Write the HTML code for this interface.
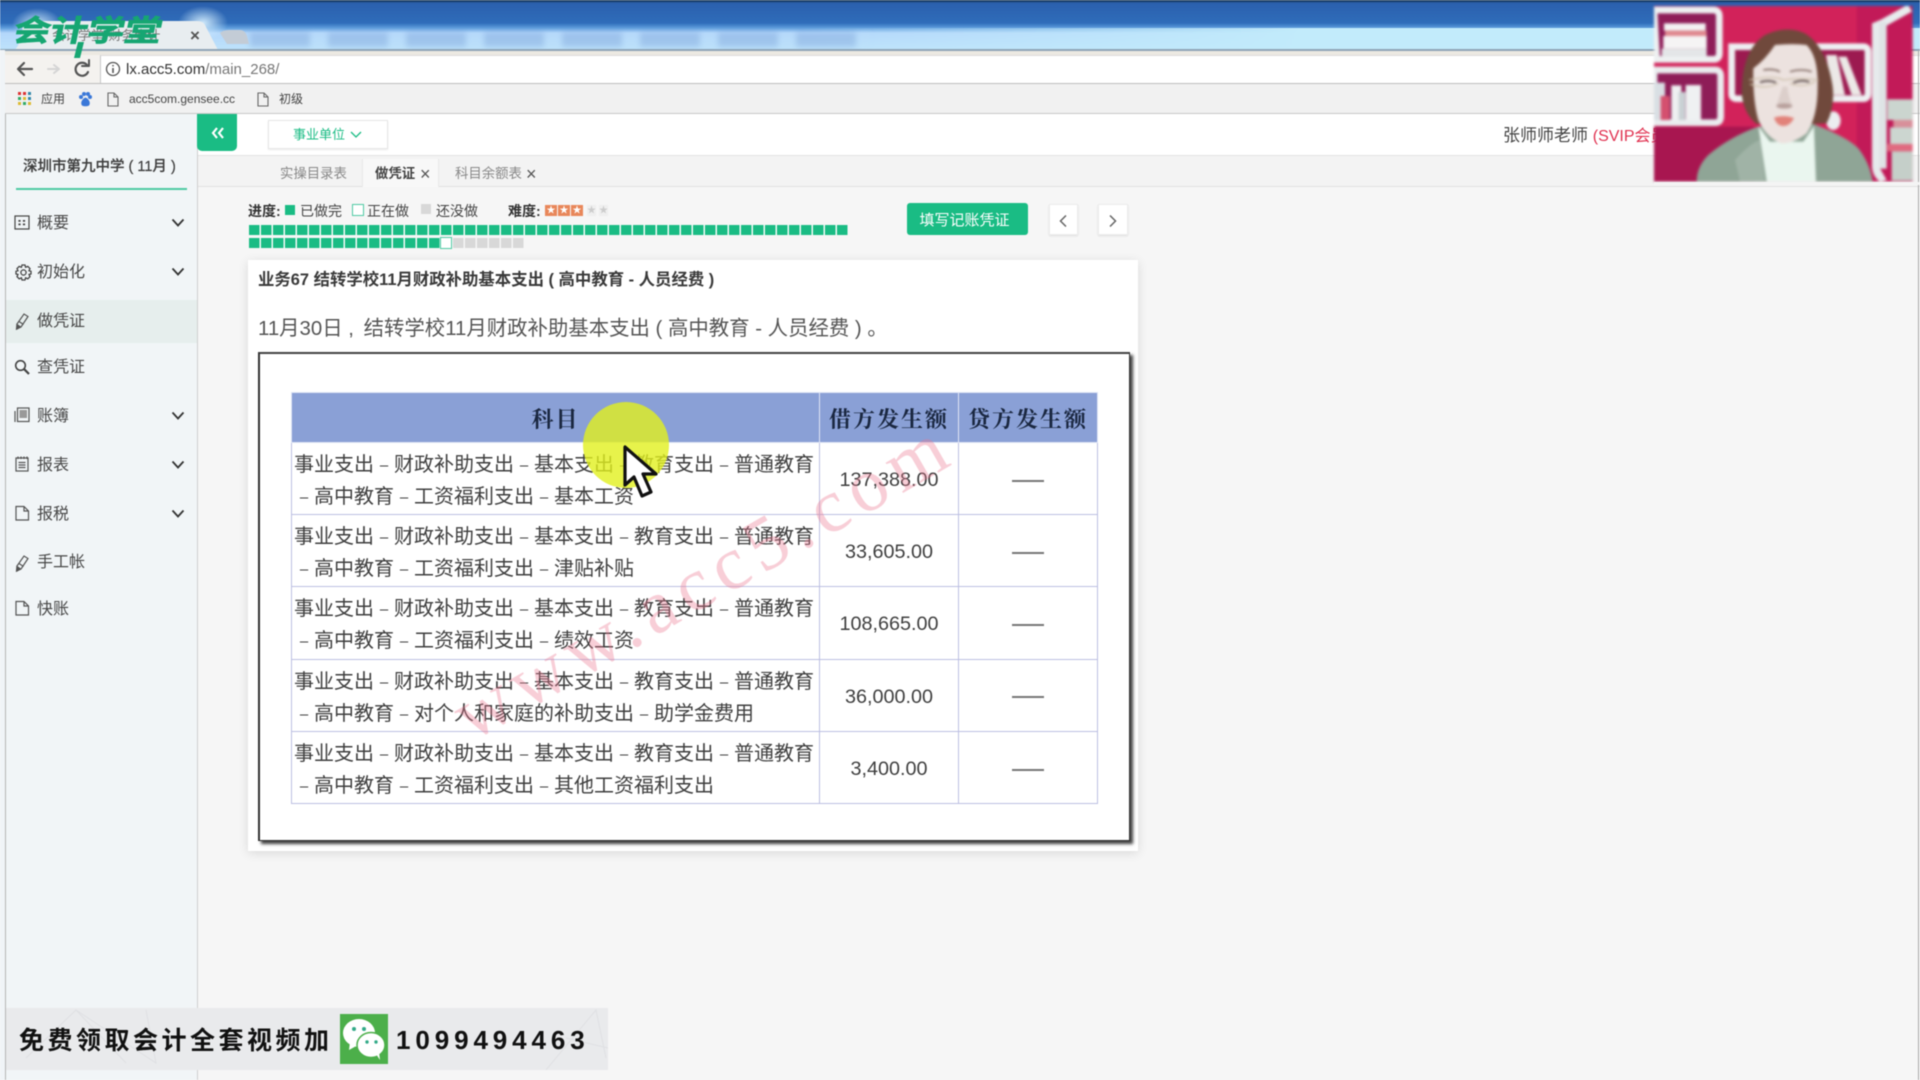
<!DOCTYPE html>
<html lang="zh"><head><meta charset="utf-8"><title>做凭证</title>
<style>
html,body{margin:0;padding:0;width:1920px;height:1080px;overflow:hidden;background:#f6f6f6}
*{box-sizing:border-box}
body{font-family:"Liberation Sans","Noto Sans CJK SC",sans-serif;color:#444}
#w{position:absolute;left:0;top:0;width:1920px;height:1080px;overflow:hidden;filter:blur(.5px)}
.a{position:absolute;white-space:nowrap}
.si{position:absolute;left:37px;font-size:16px;line-height:22px;color:#484848;white-space:nowrap}
.chev{position:absolute;left:171px}
.ic{position:absolute;left:14px}
table{position:absolute;left:291px;top:392px;width:806px;border-collapse:collapse;table-layout:fixed;font-size:20px;color:#3f3f3f}
th{height:50px;background:#8aa0d6;border:1px solid #dfe5f5;font-family:"Noto Serif CJK SC","Noto Sans CJK SC",serif;font-weight:700;font-size:22px;letter-spacing:2px;color:#1a2740;padding:2px 0 0;text-align:center}
td{height:72.2px;border:1px solid #bcbfe2;padding:3px 0 0;line-height:32px;white-space:nowrap;background:#fff}
td.t{padding:5px 0 0 2px}
td.n{text-align:center;font-size:19.8px}
td.d{text-align:center;color:#666}
td.d span{display:inline-block;width:32px;height:2px;background:#777;vertical-align:middle;font-size:0}
i{font-style:normal;display:inline-block;width:20px;text-align:center;font-size:15px;line-height:1;position:relative;top:-1px}
.sq{position:absolute;height:10px}
.st{position:absolute;top:205px;width:12px;height:11px;background:#e8875a;color:#fff;font-size:9px;line-height:11px;text-align:center}
.st2{background:#efefef;color:#ccc;width:9px}
</style></head><body><div id="w">

<!-- browser chrome -->
<div class="a" style="left:0;top:0;width:1920px;height:50px;background:linear-gradient(180deg,#17395e 0,#17395e 1px,#2b60ae 3px,#2f6dba 23px,#5e9ddc 28px,#b4d7fb 33px,#bde2fb 49px)"></div>
<div class="a" style="left:800px;top:28px;width:1120px;height:21px;background:linear-gradient(90deg,rgba(196,238,252,0),#c2ebfb 500px)"></div>
<div class="a" style="left:250px;top:32px;width:620px;height:15px;background:repeating-linear-gradient(90deg,rgba(120,160,215,.4) 0 60px,rgba(190,225,250,.2) 60px 78px);filter:blur(3px)"></div>
<div class="a" style="left:12px;top:8px;width:50px;height:34px;background:radial-gradient(closest-side,rgba(215,240,255,.95),rgba(215,240,255,0));"></div>
<div class="a" style="left:178px;top:6px;width:50px;height:34px;background:radial-gradient(closest-side,rgba(215,240,255,.95),rgba(215,240,255,0));"></div>
<svg class="a" style="left:0;top:0" width="300" height="56"><path d="M5 56V52H8Q17 52 20 40L23 26Q24 21 30 21H197Q204 21 206 27L218 50H300V56Z" fill="#e8edf0"/><path d="M220 33Q223 30 229 30H240Q245 30 247 36L249 44H227Z" fill="#c3ccd6"/></svg>
<div class="a" style="left:52px;top:27px;font-size:13px;line-height:18px;color:#777">会计学堂-财务会计</div>
<div class="a" style="left:190px;top:27px;font-size:17px;line-height:18px;color:#555;font-weight:700">×</div>

<div class="a" style="left:0;top:49px;width:1920px;height:2px;background:#8fa4b6"></div>
<div class="a" style="left:0;top:51px;width:1920px;height:5px;background:#ece9e2"></div>
<div class="a" style="left:0;top:55px;width:1920px;height:29px;background:#f4f2ef"></div>
<div class="a" style="left:100px;top:55px;width:1820px;height:28px;background:#fff;border-left:1px solid #c8c8c8;border-top:1px solid #ddd"></div>
<div class="a" style="left:0;top:83px;width:1920px;height:1px;background:#bdbdbd"></div>
<div class="a" style="left:0;top:84px;width:1920px;height:29px;background:#f1f1f1"></div>
<div class="a" style="left:0;top:113px;width:1920px;height:1px;background:#c8c8c8"></div>

<svg class="a" style="left:14px;top:58px" width="80" height="24" fill="none" stroke-linecap="round" stroke-linejoin="round">
<path d="M18 11H5M10 5L4 11L10 17" stroke="#555" stroke-width="2.2"/>
<path d="M34 11H44M40 7L45 11L40 15" stroke="#d5d5d5" stroke-width="2"/>
<path d="M73 7A6.5 6.5 0 1 0 74 14" stroke="#555" stroke-width="2.2"/><path d="M68 6H75V0" transform="translate(0,2)" stroke="#555" stroke-width="2"/>
</svg>
<svg class="a" style="left:105px;top:61px" width="16" height="16" fill="none"><circle cx="8" cy="8" r="6.5" stroke="#555" stroke-width="1.3"/><path d="M8 7V12M8 4V5.4" stroke="#555" stroke-width="1.6"/></svg>
<div class="a" style="left:126px;top:60px;font-size:15px;line-height:20px;color:#333">lx.acc5.com<span style="color:#777">/main_268/</span></div>

<svg class="a" style="left:18px;top:92px" width="14" height="15"><g><rect x="0" y="0" width="3" height="3" fill="#d33"/><rect x="5" y="0" width="3" height="3" fill="#d33"/><rect x="10" y="0" width="3" height="3" fill="#38a"/><rect x="0" y="5" width="3" height="3" fill="#3a6"/><rect x="5" y="5" width="3" height="3" fill="#db3"/><rect x="10" y="5" width="3" height="3" fill="#38a"/><rect x="0" y="10" width="3" height="3" fill="#db3"/><rect x="5" y="10" width="3" height="3" fill="#3a6"/><rect x="10" y="10" width="3" height="3" fill="#db3"/></g></svg>
<div class="a" style="left:41px;top:90px;font-size:12px;line-height:18px;color:#444">应用</div>
<svg class="a" style="left:78px;top:92px" width="15" height="15" fill="#3b78d8"><circle cx="3" cy="5" r="2"/><circle cx="12" cy="5" r="2"/><circle cx="6" cy="2" r="2"/><circle cx="10" cy="2" r="2"/><path d="M7.5 5.5C4 7 2 11 4 13.5C6 14.5 9 14.5 11 13.5C13 11 11 7 7.5 5.5Z"/></svg>
<svg class="a" style="left:107px;top:92px" width="12" height="15" fill="none" stroke="#666" stroke-width="1.1"><path d="M1 1H7L11 5V14H1ZM7 1V5H11"/></svg>
<div class="a" style="left:129px;top:90px;font-size:12px;line-height:18px;color:#444;width:111px;overflow:hidden">acc5com.gensee.cc</div>
<svg class="a" style="left:257px;top:92px" width="12" height="15" fill="none" stroke="#666" stroke-width="1.1"><path d="M1 1H7L11 5V14H1ZM7 1V5H11"/></svg>
<div class="a" style="left:279px;top:90px;font-size:12px;line-height:18px;color:#444">初级</div>

<!-- logo -->
<div class="a" style="left:17px;top:16px;font-size:37px;line-height:37px;font-weight:700;color:#16a672;transform:skewX(-12deg) scaleY(.8);transform-origin:left top;-webkit-text-stroke:1px #16a672;letter-spacing:0">会计学堂</div>
<div class="a" style="left:76px;top:42px;width:6px;height:16px;background:#16a672;transform:skewX(-14deg)"></div>

<!-- app header -->
<div class="a" style="left:0;top:114px;width:1920px;height:42px;background:#fff"></div>
<div class="a" style="left:0;top:155px;width:1920px;height:1px;background:#e2e2e2"></div>
<div class="a" style="left:0;top:156px;width:1920px;height:30px;background:#f3f3f3"></div>
<div class="a" style="left:0;top:186px;width:1920px;height:1px;background:#e0e0e0"></div>
<div class="a" style="left:1918px;top:50px;width:1px;height:1030px;background:#aaa"></div>

<!-- left edge + sidebar -->
<div class="a" style="left:0;top:50px;width:5px;height:1030px;background:#f0f4f7"></div>
<div class="a" style="left:5px;top:114px;width:193px;height:966px;background:#f1f5f7;border-left:1px solid #b5b5b5;border-right:1px solid #cfcfcf"></div>
<div class="a" style="left:6px;top:300px;width:191px;height:43px;background:#e6eeed"></div>

<div class="a" style="left:23px;top:156px;font-size:14.5px;line-height:22px;color:#3e3e3e;font-weight:500;-webkit-text-stroke:.2px #3e3e3e">深圳市第九中学 ( 11月 )</div>
<div class="a" style="left:16px;top:188px;width:171px;height:2px;background:#4fcaa3"></div>

<div class="si" style="top:213px">概要</div>
<div class="si" style="top:262px">初始化</div>
<div class="si" style="top:311px">做凭证</div>
<div class="si" style="top:357px">查凭证</div>
<div class="si" style="top:406px">账簿</div>
<div class="si" style="top:455px">报表</div>
<div class="si" style="top:504px">报税</div>
<div class="si" style="top:552px">手工帐</div>
<div class="si" style="top:599px">快账</div>

<svg class="ic" style="top:215px" width="16" height="16" fill="none" stroke="#444" stroke-width="1.2"><rect x="1" y="1" width="14" height="13"/><path d="M5.5 5V6.8M5.5 8.5V10.3M10 5V6.8M10 8.5V10.3" stroke-width="2.2"/></svg>
<svg class="ic" style="top:264px;left:15px" width="17" height="17" fill="none" stroke="#444" stroke-width="1.3"><circle cx="8.5" cy="8.5" r="2.6"/><path d="M7 1H10L10.6 3.3L12.8 2.4L15 4.6L14 6.7L16 7.2V10L14 10.5L15 12.6L12.8 14.8L10.6 13.8L10 16H7L6.4 13.8L4.2 14.8L2 12.6L3 10.5L1 10V7.2L3 6.7L2 4.6L4.2 2.4L6.4 3.3Z"/></svg>
<svg class="ic" style="top:312px" width="16" height="18" fill="none" stroke="#555" stroke-width="1.2"><path d="M3 12L10 2L14 4.5L7 15L2.5 17Z"/><path d="M5 9.5L9.5 12.5" /><path d="M3 12.5L6.5 15L3 17Z" fill="#555"/></svg>
<svg class="ic" style="top:359px" width="16" height="16" fill="none" stroke="#444" stroke-width="1.6"><circle cx="6.5" cy="6.5" r="4.8"/><path d="M10.2 10.2L15 15" stroke-width="2.2"/></svg>
<svg class="ic" style="top:407px" width="16" height="16" fill="none" stroke="#555" stroke-width="1.2"><rect x="3.5" y="1" width="11.5" height="13.5"/><rect x="5.5" y="3" width="7.5" height="8" fill="#999" stroke="none"/><path d="M1 4V15"/></svg>
<svg class="ic" style="top:456px" width="16" height="16" fill="none" stroke="#555" stroke-width="1.2"><rect x="2" y="2" width="12" height="13"/><path d="M4 0.5V3M7 0.5V3M10 0.5V3M13 0.5V3M4.5 6.5H11.5M4.5 9H11.5M4.5 11.5H11.5"/></svg>
<svg class="ic" style="top:505px" width="16" height="16" fill="none" stroke="#555" stroke-width="1.2"><path d="M2 1.5H10L14.5 6V15H2ZM10 1.5V6H14.5"/></svg>
<svg class="ic" style="top:554px" width="16" height="18" fill="none" stroke="#555" stroke-width="1.2"><path d="M3 12L10 2L14 4.5L7 15L2.5 17Z"/><path d="M5 9.5L9.5 12.5"/><path d="M3 12.5L6.5 15L3 17Z" fill="#555"/></svg>
<svg class="ic" style="top:600px" width="16" height="16" fill="none" stroke="#555" stroke-width="1.2"><path d="M2 1.5H10L14.5 6V15H2ZM10 1.5V6H14.5"/></svg>

<svg class="chev" style="top:218px" width="14" height="10" fill="none" stroke="#333" stroke-width="1.8"><path d="M1.5 1.5L7 7.5L12.5 1.5"/></svg>
<svg class="chev" style="top:267px" width="14" height="10" fill="none" stroke="#333" stroke-width="1.8"><path d="M1.5 1.5L7 7.5L12.5 1.5"/></svg>
<svg class="chev" style="top:411px" width="14" height="10" fill="none" stroke="#333" stroke-width="1.8"><path d="M1.5 1.5L7 7.5L12.5 1.5"/></svg>
<svg class="chev" style="top:460px" width="14" height="10" fill="none" stroke="#333" stroke-width="1.8"><path d="M1.5 1.5L7 7.5L12.5 1.5"/></svg>
<svg class="chev" style="top:509px" width="14" height="10" fill="none" stroke="#333" stroke-width="1.8"><path d="M1.5 1.5L7 7.5L12.5 1.5"/></svg>

<!-- top controls -->
<div class="a" style="left:197px;top:114px;width:40px;height:37px;background:#1abc84;border-radius:0 0 5px 5px"></div>
<svg class="a" style="left:211px;top:127px" width="13" height="12" fill="none" stroke="#fff" stroke-width="2.2"><path d="M6 1L2 6L6 11M12 1L8 6L12 11"/></svg>
<div class="a" style="left:268px;top:120px;width:120px;height:29px;background:#fff;border:1px solid #e6e6e6;box-shadow:0 1px 2px rgba(0,0,0,.08)"></div>
<div class="a" style="left:293px;top:125px;font-size:13px;line-height:20px;color:#1abc84">事业单位</div>
<svg class="a" style="left:350px;top:131px" width="12" height="8" fill="none" stroke="#1abc84" stroke-width="1.3"><path d="M1 1L6 6L11 1"/></svg>

<div class="a" style="left:1503px;top:124px;font-size:17px;line-height:24px;color:#444">张师师老师 <span style="color:#e0304f;font-size:16px">(SVIP会员)</span></div>

<!-- tabs -->
<div class="a" style="left:362px;top:159px;width:77px;height:28px;background:#f8f8f8;border-left:1px solid #e8e8e8;border-right:1px solid #e8e8e8"></div>
<div class="a" style="left:280px;top:164px;font-size:13.4px;line-height:20px;color:#888">实操目录表</div>
<div class="a" style="left:375px;top:164px;font-size:13.4px;line-height:20px;color:#444;font-weight:700">做凭证</div>
<div class="a" style="left:420px;top:164px;font-size:18px;line-height:20px;color:#555">×</div>
<div class="a" style="left:455px;top:164px;font-size:13.4px;line-height:20px;color:#888">科目余额表</div>
<div class="a" style="left:526px;top:164px;font-size:18px;line-height:20px;color:#555">×</div>

<!-- progress -->
<div class="a" style="left:248px;top:201px;font-size:14px;line-height:20px;font-weight:700;color:#333">进度:</div>
<div class="a" style="left:285px;top:205px;width:10px;height:10px;background:#1abc84"></div>
<div class="a" style="left:300px;top:201px;font-size:14px;line-height:20px">已做完</div>
<div class="a" style="left:352px;top:204px;width:12px;height:12px;background:#fff;border:1px solid #4fcaa3"></div>
<div class="a" style="left:367px;top:201px;font-size:14px;line-height:20px">正在做</div>
<div class="a" style="left:421px;top:204px;width:10px;height:10px;background:#d8d8d8"></div>
<div class="a" style="left:436px;top:201px;font-size:14px;line-height:20px">还没做</div>
<div class="a" style="left:508px;top:201px;font-size:14px;line-height:20px;font-weight:700;color:#333">难度:</div>
<div class="st" style="left:545px">★</div><div class="st" style="left:558px">★</div><div class="st" style="left:571px">★</div>
<div class="st st2" style="left:587px">★</div><div class="st st2" style="left:599px">★</div>

<div class="sq" style="left:249px;top:225px;width:599px;background:repeating-linear-gradient(90deg,#1abc84 0 10.6px,#f3faf7 10.6px 12px)"></div>
<div class="sq" style="left:249px;top:238px;width:191px;background:repeating-linear-gradient(90deg,#1abc84 0 10.6px,#f3faf7 10.6px 12px)"></div>
<div class="a" style="left:440px;top:237px;width:12px;height:12px;background:#fff;border:1px solid #4fcaa3"></div>
<div class="sq" style="left:453px;top:238px;width:72px;background:repeating-linear-gradient(90deg,#d8d8d8 0 10.6px,#f6f6f6 10.6px 12px)"></div>

<div class="a" style="left:907px;top:203px;width:121px;height:32px;background:#1abc84;border-radius:3px;color:#fff;font-size:15px;line-height:36px;padding-right:6px;text-align:center">填写记账凭证</div>
<div class="a" style="left:1049px;top:204px;width:29px;height:31px;background:#fff;border:1px solid #ececec;box-shadow:0 1px 2px rgba(0,0,0,.1)"></div>
<svg class="a" style="left:1058px;top:214px" width="11" height="14" fill="none" stroke="#666" stroke-width="1.5"><path d="M8 1.5L2.5 7L8 12.5"/></svg>
<div class="a" style="left:1098px;top:204px;width:30px;height:31px;background:#fff;border:1px solid #ececec;box-shadow:0 1px 2px rgba(0,0,0,.1)"></div>
<svg class="a" style="left:1107px;top:214px" width="11" height="14" fill="none" stroke="#666" stroke-width="1.5"><path d="M3 1.5L8.5 7L3 12.5"/></svg>

<!-- card -->
<div class="a" style="left:248px;top:260px;width:890px;height:591px;background:#fff;box-shadow:0 2px 10px rgba(0,0,0,.12)"></div>
<div class="a" style="left:258px;top:269px;font-size:16.4px;line-height:22px;font-weight:700;color:#3a3a3a">业务67 结转学校11月财政补助基本支出 ( 高中教育 - 人员经费 )</div>
<div class="a" style="left:258px;top:314px;font-size:20.4px;line-height:30px;color:#555">11月30日<span style="margin-right:4px"> , </span>结转学校11月财政补助基本支出 ( 高中教育 - 人员经费 ) 。</div>
<div class="a" style="left:258px;top:352px;width:872px;height:489px;background:#fff;border:1px solid #333;border-top:2px solid #444;border-left:2px solid #333;box-shadow:3px 3px 3px rgba(0,0,0,.75)"></div>

<table>
<colgroup><col style="width:528px"><col style="width:139px"><col style="width:139px"></colgroup>
<tr><th>科目</th><th>借方发生额</th><th>贷方发生额</th></tr>
<tr><td class="t">事业支出<i>–</i>财政补助支出<i>–</i>基本支出<i>–</i>教育支出<i>–</i>普通教育<br><i>–</i>高中教育<i>–</i>工资福利支出<i>–</i>基本工资</td><td class="n">137,388.00</td><td class="d"><span>—</span></td></tr>
<tr><td class="t">事业支出<i>–</i>财政补助支出<i>–</i>基本支出<i>–</i>教育支出<i>–</i>普通教育<br><i>–</i>高中教育<i>–</i>工资福利支出<i>–</i>津贴补贴</td><td class="n">33,605.00</td><td class="d"><span>—</span></td></tr>
<tr><td class="t">事业支出<i>–</i>财政补助支出<i>–</i>基本支出<i>–</i>教育支出<i>–</i>普通教育<br><i>–</i>高中教育<i>–</i>工资福利支出<i>–</i>绩效工资</td><td class="n">108,665.00</td><td class="d"><span>—</span></td></tr>
<tr><td class="t">事业支出<i>–</i>财政补助支出<i>–</i>基本支出<i>–</i>教育支出<i>–</i>普通教育<br><i>–</i>高中教育<i>–</i>对个人和家庭的补助支出<i>–</i>助学金费用</td><td class="n">36,000.00</td><td class="d"><span>—</span></td></tr>
<tr><td class="t">事业支出<i>–</i>财政补助支出<i>–</i>基本支出<i>–</i>教育支出<i>–</i>普通教育<br><i>–</i>高中教育<i>–</i>工资福利支出<i>–</i>其他工资福利支出</td><td class="n">3,400.00</td><td class="d"><span>—</span></td></tr>
</table>

<!-- watermark -->
<div class="a" style="left:472px;top:674px;font-family:'Liberation Serif',serif;font-size:76px;line-height:86px;letter-spacing:8px;color:rgba(235,120,145,.36);transform:rotate(-30deg);transform-origin:0 69px">www.acc5.com</div>

<!-- highlight + cursor -->
<div class="a" style="left:583px;top:402px;width:86px;height:86px;border-radius:50%;background:rgba(225,240,30,.8)"></div>
<svg class="a" style="left:620px;top:443px" width="42" height="60"><path d="M5 4L5 42L14 34L22 53L31 49L23 31L36 31Z" fill="#fff" stroke="#111" stroke-width="3.2" stroke-linejoin="round"/></svg>

<!-- video -->
<svg class="a" style="left:1650px;top:0;filter:blur(1.2px)" width="270" height="190" viewBox="0 0 810 570">
<defs><clipPath id="vc"><rect x="12" y="18" width="776" height="527"/></clipPath></defs>
<g clip-path="url(#vc)">
<rect x="12" y="18" width="776" height="527" fill="#d2225a"/>
<rect x="12" y="380" width="300" height="165" fill="#a81650"/>
<rect x="620" y="18" width="168" height="527" fill="#c21a58"/>
<!-- top-left shelf -->
<path d="M12 30H190Q208 30 208 50V160Q208 178 190 178H20Z" fill="#8e1d58" stroke="#eef1f2" stroke-width="20"/>
<rect x="42" y="70" width="125" height="22" fill="#f3f3f3"/><rect x="45" y="92" width="125" height="16" fill="#e0888f"/><rect x="40" y="108" width="130" height="38" fill="#f5f4f4"/><rect x="35" y="146" width="135" height="24" fill="#e4e6e8"/>
<!-- lower-left shelf -->
<path d="M12 210H195Q212 210 212 228V350Q212 368 195 368H12Z" fill="#8e1d58" stroke="#eaedef" stroke-width="20"/>
<rect x="12" y="248" width="33" height="112" fill="#d9dfe4"/><rect x="32" y="288" width="27" height="72" fill="#d4506f"/><rect x="64" y="256" width="30" height="104" fill="#eef0f1"/><rect x="86" y="276" width="20" height="84" fill="#c9d1d4"/><rect x="107" y="255" width="46" height="105" fill="#eff1f2"/>
<!-- middle shelf -->
<path d="M245 140H640Q654 140 654 156V280Q654 296 640 296H260Q245 296 245 280Z" fill="#9c1a50" stroke="#eff1f3" stroke-width="20"/>
<path d="M528 165H560L585 285H548ZM565 170H590L635 285H605Z" fill="#ece9e7"/>
<!-- right shelf -->
<path d="M680 80L780 24" stroke="#e8ecee" stroke-width="24" fill="none"/>
<path d="M666 70L690 60V505L710 540L690 545Q668 530 666 500Z" fill="#e6eaec"/><rect x="688" y="66" width="22" height="440" fill="#dfe4e6"/>
<rect x="712" y="298" width="76" height="62" fill="#cbd5cf"/><rect x="730" y="360" width="58" height="22" fill="#d8909a"/><rect x="720" y="382" width="68" height="50" fill="#ccd6d0"/><rect x="712" y="432" width="76" height="22" fill="#e06a80"/><rect x="725" y="454" width="63" height="88" fill="#c5cfc9"/>
<ellipse cx="550" cy="362" rx="22" ry="28" fill="#eceef0"/>
<!-- woman -->
<path d="M140 545Q140 500 175 465Q240 410 325 380L490 372Q590 410 625 445Q660 490 668 545Z" fill="#8fa596"/>
<path d="M255 480Q300 430 330 420L345 545H270Z" fill="#a0b3a6"/>
<path d="M275 280Q275 150 345 105Q410 75 465 100Q530 140 548 260Q555 320 530 370L490 372H320Q280 340 275 280Z" fill="#70493c"/>
<path d="M325 378L360 425H460L492 378L498 545H350Z" fill="#eaf6ef"/>
<path d="M310 205Q345 180 375 135Q430 130 470 135Q505 170 503 260Q503 350 470 400Q430 430 395 430Q350 415 325 360Q308 300 310 205Z" fill="#ecE2df"/>
<path d="M340 210Q370 205 390 215M420 215Q455 205 485 215" stroke="#6a5048" stroke-width="4" fill="none"/>
<path d="M298 240Q370 225 400 240Q450 232 505 240M300 252Q345 270 385 250M420 250Q460 265 495 245" stroke="#cfc2ae" stroke-width="4" fill="none"/>
<path d="M330 247Q355 238 378 248M430 248Q455 238 478 246" stroke="#4d3d3d" stroke-width="5" fill="none"/>
<path d="M398 260Q385 300 380 315Q402 330 426 315Q415 290 412 260Z" fill="#dccfcb"/><ellipse cx="403" cy="318" rx="24" ry="8" fill="#b8a09c"/>
<path d="M372 353Q400 343 432 354Q420 378 400 378Q380 378 372 353Z" fill="#e2827a"/>
</g>
</svg>
<div class="a" style="left:1654px;top:182px;width:266px;height:3px;background:#f4f4f4"></div>

<!-- bottom banner -->
<div class="a" style="left:6px;top:1008px;width:602px;height:62px;background:#e9eaec"></div>
<svg class="a" style="left:6px;top:1008px" width="602" height="62" fill="none" stroke="#dfe0e3"><path d="M20 50L70 2L120 55M70 2L150 55L140 2M540 62L590 2L600 50M560 30L602 40"/></svg>
<div class="a" style="left:19px;top:1023px;font-size:25px;line-height:36px;font-weight:700;color:#111;letter-spacing:3.5px">免费领取会计全套视频加</div>
<svg class="a" style="left:340px;top:1014px" width="48" height="50"><rect width="48" height="50" fill="#4caf4a"/><ellipse cx="19" cy="19" rx="16" ry="14" fill="#fff"/><path d="M10 28L9 36L18 31Z" fill="#fff"/><ellipse cx="31" cy="31" rx="14" ry="12.5" fill="#fff" stroke="#4caf4a" stroke-width="1.5"/><path d="M36 40L40 46L39 38Z" fill="#fff"/><circle cx="14" cy="15" r="2" fill="#3a8"/><circle cx="24" cy="15" r="2" fill="#3a8"/><circle cx="27" cy="28" r="1.7" fill="#3a8"/><circle cx="36" cy="28" r="1.7" fill="#3a8"/></svg>
<div class="a" style="left:396px;top:1022px;font-size:26px;line-height:36px;font-weight:700;color:#111;letter-spacing:4.9px">1099494463</div>

</div></body></html>
